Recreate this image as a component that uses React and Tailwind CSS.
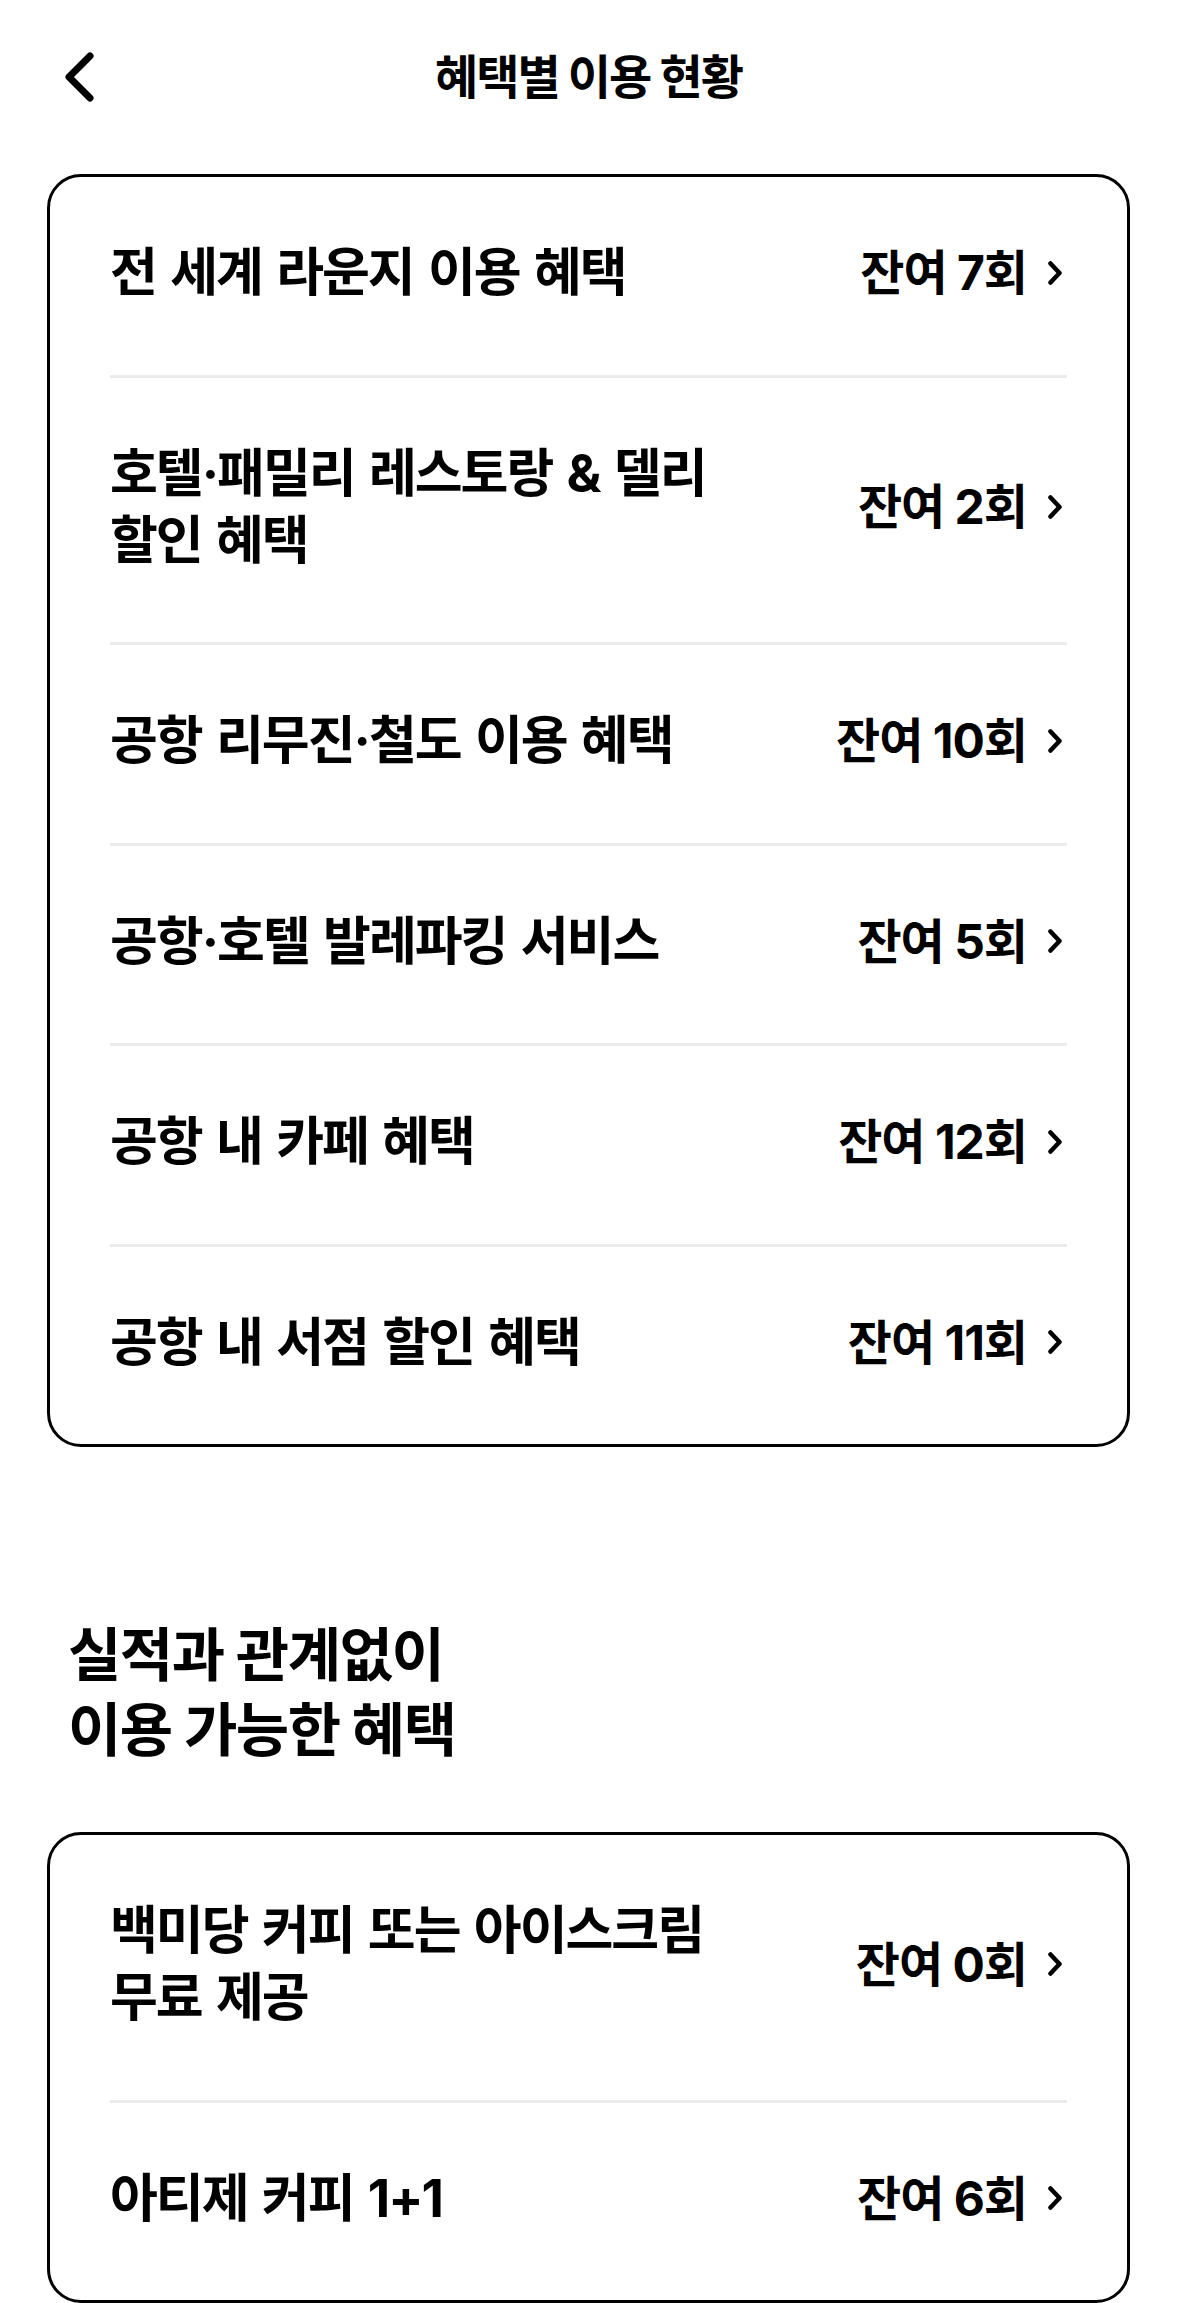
import React from 'react'

const mainBenefits = [
  { name: '전 세계 라운지 이용 혜택', left: 7 },
  { name: '호텔·패밀리 레스토랑 & 델리\n할인 혜택', left: 2 },
  { name: '공항 리무진·철도 이용 혜택', left: 10 },
  { name: '공항·호텔 발레파킹 서비스', left: 5 },
  { name: '공항 내 카페 혜택', left: 12 },
  { name: '공항 내 서점 할인 혜택', left: 11 },
]

const freeBenefits = [
  { name: '백미당 커피 또는 아이스크림\n무료 제공', left: 0 },
  { name: '아티제 커피 1+1', left: 6 },
]

const ChevronRight = () => (
  <svg width="14" height="24" viewBox="0 0 14 24" fill="none" className="ml-[21px] mr-[5px]">
    <path d="M2.5 2.5 L11.5 12 L2.5 21.5" stroke="black" strokeWidth="4.5" strokeLinecap="round" strokeLinejoin="round" />
  </svg>
)

const BenefitRow = ({ name, left }) => {
  return (
    <div className="flex items-center justify-between pt-[62px] pb-[68.5px]">
      <p className="whitespace-pre-line text-[52px] leading-[67px] font-bold tracking-[-2px] [word-spacing:4px]">
        {name}
      </p>
      <div className="flex items-center shrink-0">
        <span className="text-[48px] leading-[67px] font-bold tracking-[-1px]">잔여 {left}회</span>
        <ChevronRight />
      </div>
    </div>
  )
}

const BenefitCard = ({ items }) => {
  return (
    <div className="mx-[47px] rounded-[34px] border-[3px] border-black px-[60px]">
      {items.map((item, i) => (
        <div key={item.name}>
          {i > 0 && <div className="h-[3px] bg-[#ebebeb]" />}
          <BenefitRow name={item.name} left={item.left} />
        </div>
      ))}
    </div>
  )
}

const App = () => {
  return (
    <div className="min-h-screen bg-white text-black font-['Inter','Noto_Sans_CJK_KR',sans-serif]">
      {/* header */}
      <div className="grid h-[154px] grid-cols-[1fr_auto_1fr] items-center">
        <div className="pl-[63px]">
          <svg width="32" height="50" viewBox="0 0 32 50" fill="none">
            <path d="M27 4 L6 25 L27 46" stroke="black" strokeWidth="7" strokeLinecap="round" strokeLinejoin="round" />
          </svg>
        </div>
        <h1 className="text-[47px] font-bold tracking-[-2px]">혜택별 이용 현황</h1>
        <div />
      </div>

      <div className="pt-[20px]">
        <BenefitCard items={mainBenefits} />
      </div>

      <h2 className="mt-[171px] mb-[64px] px-[68px] text-[58px] leading-[75px] font-bold tracking-[-1.5px]">
        실적과 관계없이
        <br />
        이용 가능한 혜택
      </h2>

      <BenefitCard items={freeBenefits} />
    </div>
  )
}

export default App
